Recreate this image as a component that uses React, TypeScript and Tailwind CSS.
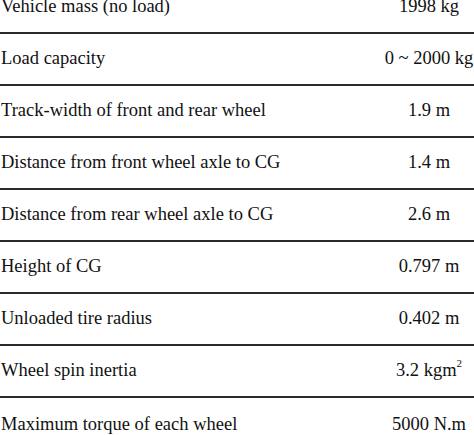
import { ReactNode } from 'react'

type SpecRow = {
  label: string
  value: ReactNode
}

const rows: SpecRow[] = [
  { label: 'Vehicle mass (no load)', value: '1998 kg' },
  { label: 'Load capacity', value: '0 ~ 2000 kg' },
  { label: 'Track-width of front and rear wheel', value: '1.9 m' },
  { label: 'Distance from front wheel axle to CG', value: '1.4 m' },
  { label: 'Distance from rear wheel axle to CG', value: '2.6 m' },
  { label: 'Height of CG', value: '0.797 m' },
  { label: 'Unloaded tire radius', value: '0.402 m' },
  {
    label: 'Wheel spin inertia',
    value: (
      <>
        3.2 kgm<sup className="relative -top-[2px] text-[11px] align-super leading-none">2</sup>
      </>
    ),
  },
  { label: 'Maximum torque of each wheel', value: '5000 N.m' },
]

const App = () => {
  return (
    <div className="h-[435px] w-[474px] overflow-hidden bg-white text-[18.5px] text-[#111] [font-family:'Liberation_Serif','Times_New_Roman',serif]">
      {/* table starts above the viewport, first row is cut */}
      <div className="-mt-[18.6px]">
        {rows.map((row, i) => (
          <div
            key={row.label}
            className={`grid h-[52.14px] grid-cols-[1fr_90px] items-center ${
              i < rows.length - 1 ? 'border-b-2 border-[#2b2b2b]' : ''
            }`}
          >
            <div className="whitespace-nowrap pl-px">{row.label}</div>
            <div className="whitespace-nowrap text-center">{row.value}</div>
          </div>
        ))}
      </div>
    </div>
  )
}

export default App
